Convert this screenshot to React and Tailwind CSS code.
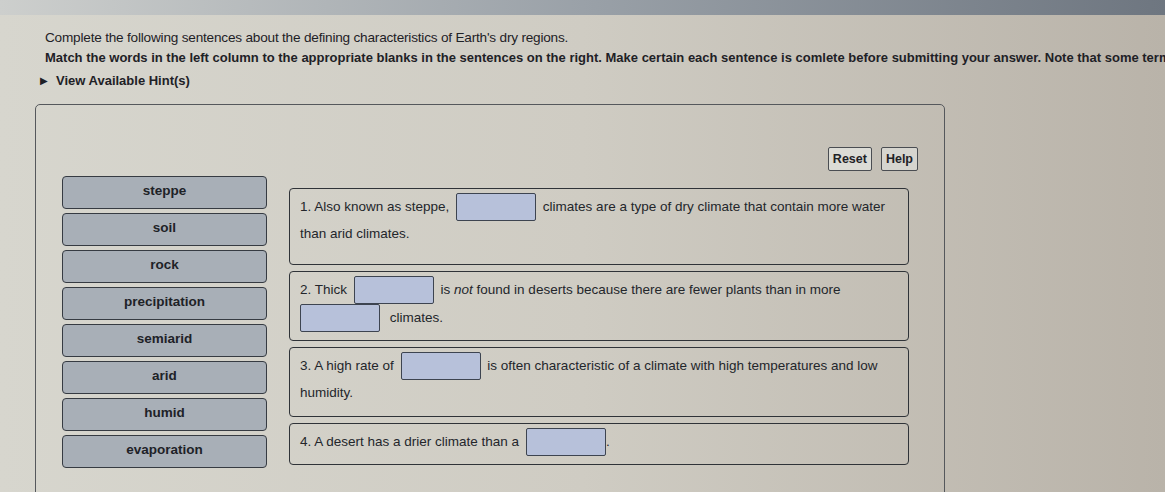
import { useState } from 'react'

const words = ['steppe', 'soil', 'rock', 'precipitation', 'semiarid', 'arid', 'humid', 'evaporation']

function Blank({ className = '' }) {
  return (
    <span
      className={`inline-block h-[28px] w-[80px] rounded-[2px] border border-[#3d4450] bg-[#b7c1da] align-middle ${className}`}
    />
  )
}

function SentenceBox({ children, className = '' }) {
  return (
    <div
      className={`rounded-[4px] border-[1.5px] border-[#2f3338] px-[10px] py-[4px] text-[13.5px] leading-[26px] text-[#23262b] ${className}`}
    >
      {children}
    </div>
  )
}

export default function App() {
  const [placed] = useState({})

  return (
    <div
      className="relative h-[492px] w-[1165px] overflow-hidden bg-gradient-to-r from-[#d7d6ce] via-[#cfccc3] to-[#b9b3a9] text-[#1e2126]"
      style={{ fontFamily: '"Liberation Sans", Arial, sans-serif' }}
    >
      <div className="h-[15px] w-full bg-gradient-to-r from-[#cdcfcd] via-[#9aa1a8] to-[#6e7680]" />

      <div className="pl-[45px] pt-[14px]">
        <p className="text-[13.6px] leading-[18px] tracking-[-0.2px]">
          Complete the following sentences about the defining characteristics of Earth&apos;s dry regions.
        </p>
        <p className="mt-[2px] whitespace-nowrap text-[13px] font-bold leading-[18px]">
          Match the words in the left column to the appropriate blanks in the sentences on the right. Make certain each
          sentence is comlete before submitting your answer. Note that some terms may be used more than once.
        </p>
        <div className="mt-[5px] flex items-center gap-[8px]">
          <span className="-ml-[5px] text-[10px] leading-none">▶</span>
          <span className="text-[13px] font-bold leading-[18px]">View Available Hint(s)</span>
        </div>
      </div>

      <div className="ml-[35px] mt-[14px] h-[420px] w-[910px] rounded-[5px] border-[1.5px] border-[#55585c] pt-[42px]">
        <div className="flex justify-end gap-[9px] pr-[26px]">
          <button className="rounded-[2px] border border-[#4a4d52] bg-[#dcdcd6] px-[4px] py-[2px] text-[12.5px] font-bold leading-[18px] text-[#1f2226]">
            Reset
          </button>
          <button className="rounded-[2px] border border-[#4a4d52] bg-[#d6d5cf] px-[4px] py-[2px] text-[12.5px] font-bold leading-[18px] text-[#1f2226]">
            Help
          </button>
        </div>

        <div className="mt-[5px] flex gap-[22px] pl-[26px]">
          <div className="flex w-[205px] flex-col gap-[4px]">
            {words.map((w) => (
              <div
                key={w}
                className="flex h-[33px] items-start justify-center rounded-[4px] border-[1.5px] border-[#363b42] bg-[#a8afb7] pt-[6px] text-[13.5px] font-bold leading-[16px] text-[#1e2227]"
              >
                {placed[w] ? '' : w}
              </div>
            ))}
          </div>

          <div className="mt-[12px] flex w-[620px] flex-col gap-[6px]">
            <SentenceBox className="h-[77px]">
              1. Also known as steppe, <Blank className="mx-[3px]" /> climates are a type of dry climate that contain more
              water than arid climates.
            </SentenceBox>
            <SentenceBox className="h-[70px]">
              2. Thick <Blank className="mx-[3px]" /> is <i>not</i> found in deserts because there are fewer plants than in
              more <Blank className="mr-[6px]" /> climates.
            </SentenceBox>
            <SentenceBox className="h-[70px]">
              3. A high rate of <Blank className="mx-[3px]" /> is often characteristic of a climate with high temperatures and
              low humidity.
            </SentenceBox>
            <SentenceBox className="h-[42px]">
              4. A desert has a drier climate than a <Blank className="ml-[3px]" />.
            </SentenceBox>
          </div>
        </div>
      </div>
    </div>
  )
}
